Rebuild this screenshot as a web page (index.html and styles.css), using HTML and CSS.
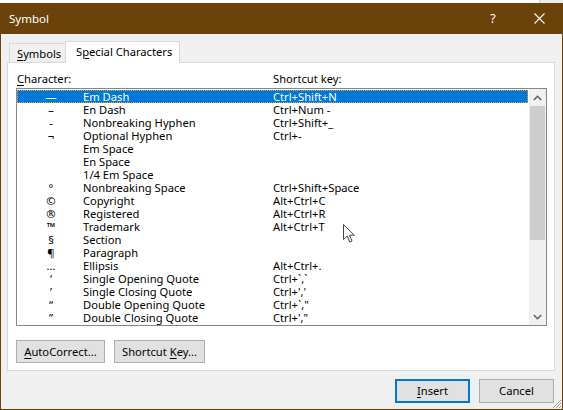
FILE: index.html
```html
<!DOCTYPE html>
<html>
<head>
<meta charset="utf-8">
<link rel="stylesheet" href="styles.css">
</head>
<body>
<div class="topstrip"><div class="other"></div></div>
<div class="window">
  <div class="titlebar">
    <span class="title">Symbol</span>
    <span class="help">?</span>
    <span class="close"><svg width="11" height="11" viewBox="0 0 11 11"><path d="M0.5 0.5L10.5 10.5M10.5 0.5L0.5 10.5" stroke="#fff" stroke-width="1.1" fill="none"/></svg></span>
  </div>
  <div class="content">
    <div class="tabs">
      <div class="tab"><span><u>S</u>ymbols</span></div>
      <div class="tab active"><span>S<u>p</u>ecial Characters</span></div>
    </div>
    <div class="panel">
      <div class="labels">
        <span class="lab-char"><u>C</u>haracter:</span>
        <span class="lab-key">Shortcut key:</span>
      </div>
      <div class="list">
        <div class="rows">
          <div class="row selected"><span class="sym">—</span><span class="name">Em Dash</span><span class="key">Ctrl+Shift+N</span></div>
          <div class="row"><span class="sym">–</span><span class="name">En Dash</span><span class="key">Ctrl+Num -</span></div>
          <div class="row"><span class="sym small">-</span><span class="name">Nonbreaking Hyphen</span><span class="key">Ctrl+Shift+_</span></div>
          <div class="row"><span class="sym">¬</span><span class="name">Optional Hyphen</span><span class="key">Ctrl+-</span></div>
          <div class="row"><span class="sym"></span><span class="name">Em Space</span><span class="key"></span></div>
          <div class="row"><span class="sym"></span><span class="name">En Space</span><span class="key"></span></div>
          <div class="row"><span class="sym"></span><span class="name">1/4 Em Space</span><span class="key"></span></div>
          <div class="row"><span class="sym">°</span><span class="name">Nonbreaking Space</span><span class="key">Ctrl+Shift+Space</span></div>
          <div class="row"><span class="sym">©</span><span class="name">Copyright</span><span class="key">Alt+Ctrl+C</span></div>
          <div class="row"><span class="sym">®</span><span class="name">Registered</span><span class="key">Alt+Ctrl+R</span></div>
          <div class="row"><span class="sym">™</span><span class="name">Trademark</span><span class="key">Alt+Ctrl+T</span></div>
          <div class="row"><span class="sym">§</span><span class="name">Section</span><span class="key"></span></div>
          <div class="row"><span class="sym">¶</span><span class="name">Paragraph</span><span class="key"></span></div>
          <div class="row"><span class="sym">…</span><span class="name">Ellipsis</span><span class="key">Alt+Ctrl+.</span></div>
          <div class="row"><span class="sym">‘</span><span class="name">Single Opening Quote</span><span class="key">Ctrl+`,`</span></div>
          <div class="row"><span class="sym">’</span><span class="name">Single Closing Quote</span><span class="key">Ctrl+','</span></div>
          <div class="row"><span class="sym">“</span><span class="name">Double Opening Quote</span><span class="key">Ctrl+`,"</span></div>
          <div class="row"><span class="sym">”</span><span class="name">Double Closing Quote</span><span class="key">Ctrl+',"</span></div>
        </div>
        <div class="scrollbar">
          <div class="arrow"><svg width="9" height="6" viewBox="0 0 9 6"><path d="M0.8 5L4.5 1.3L8.2 5" stroke="#606060" stroke-width="1.6" fill="none"/></svg></div>
          <div class="thumb"></div>
          <div class="track"></div>
          <div class="arrow"><svg width="9" height="6" viewBox="0 0 9 6"><path d="M0.8 1L4.5 4.7L8.2 1" stroke="#606060" stroke-width="1.6" fill="none"/></svg></div>
        </div>
      </div>
      <div class="panel-buttons">
        <div class="btn btn-auto"><span><u>A</u>utoCorrect...</span></div>
        <div class="btn btn-short"><span>Shortcut <u>K</u>ey...</span></div>
      </div>
    </div>
    <div class="dialog-buttons">
      <div class="btn btn-dlg btn-insert"><span><u>I</u>nsert</span></div>
      <div class="btn btn-dlg"><span>Cancel</span></div>
    </div>
  </div>
  <svg class="grip" width="10" height="10" viewBox="0 0 10 10"><path d="M9 1L1 9M9 4L4 9M9 7L7 9" stroke="#a0a0a0" stroke-width="1" fill="none"/></svg>
  <svg class="cursor" width="14" height="20" viewBox="0 0 14 20"><path d="M0.5 0.5L0.5 15.5L4.2 12L6.8 18L9 17L6.5 11.2L11.3 11.2Z" fill="#fff" stroke="#444" stroke-width="1" stroke-linejoin="round"/></svg>
</div>
</body>
</html>
```
FILE: styles.css
```css
html, body {
  margin: 0;
  padding: 0;
  background: #ffffff;
}
body {
  width: 563px;
  height: 410px;
  overflow: hidden;
  font-family: "Noto Sans", "Open Sans", sans-serif;
  font-size: 11.2px;
  color: #000;
}
u { text-decoration: underline; text-underline-offset: 2px; }
.topstrip {
  height: 3px;
  display: flex;
  justify-content: flex-end;
}
.topstrip .other {
  width: 23px;
  background: #ececec;
  border-left: 1px solid #cfcfcf;
}
.window {
  position: relative;
  width: 563px;
  height: 407px;
  box-sizing: border-box;
  border: 1px solid #6b430a;
  border-top: none;
  background: #f0f0f0;
  display: flex;
  flex-direction: column;
}
.titlebar {
  height: 31px;
  flex: none;
  background: #6b430a;
  color: #fff;
  display: flex;
  align-items: center;
  padding-left: 8px;
  box-sizing: border-box;
}
.title { flex: 1; font-size: 11.5px; }
.help {
  width: 12px;
  text-align: center;
  font-size: 12.5px;
  margin-right: 35px;
}
.close {
  width: 11px;
  height: 11px;
  display: flex;
  margin-right: 17px;
  margin-top: -1px;
}
.content {
  flex: 1;
  padding: 7px 7px 0 6px;
  display: flex;
  flex-direction: column;
}
.tabs {
  height: 21px;
  display: flex;
  align-items: flex-end;
  padding-left: 2px;
  position: relative;
  z-index: 1;
}
.tab {
  height: 19px;
  box-sizing: border-box;
  border: 1px solid #d9d9d9;
  border-bottom: none;
  background: #f0f0f0;
  width: 57px;
  padding-left: 7px;
  line-height: 19px;
  white-space: nowrap;
}
.tab.active {
  height: 22px;
  margin-bottom: -1px;
  margin-left: -1px;
  width: 115px;
  background: #fff;
  padding-left: 10px;
  line-height: 20px;
}
.panel {
  height: 309px;
  box-sizing: border-box;
  border: 1px solid #d9d9d9;
  background: #fff;
  display: flex;
  flex-direction: column;
  padding: 0 6px 0 8px;
}
.labels {
  height: 25px;
  box-sizing: border-box;
  padding-top: 8px;
  display: flex;
  line-height: 16px;
}
.lab-char { width: 256px; padding-left: 1px; }
.list {
  height: 238px;
  width: 531px;
  box-sizing: border-box;
  border: 1px solid #828790;
  display: flex;
}
.rows {
  flex: 1;
  padding-top: 1px;
}
.row {
  height: 13px;
  line-height: 13px;
  display: flex;
  box-sizing: border-box;
  width: 511px;
  white-space: nowrap;
}
.row.selected {
  background: #0078d7;
  color: #fff;
  outline: 1px dotted #f3a040;
  outline-offset: -1px;
}
.sym {
  width: 66px;
  padding-left: 2px;
  text-align: center;
  box-sizing: border-box;
}
.name { width: 190px; }
.key { flex: 1; }
.scrollbar {
  width: 17px;
  background: #f0f0f0;
  display: flex;
  flex-direction: column;
}
.arrow {
  height: 17px;
  display: flex;
  align-items: center;
  justify-content: center;
}
.thumb {
  height: 134px;
  margin: 0 1px;
  background: #cdcdcd;
}
.track { flex: 1; }
.panel-buttons {
  margin-top: 14px;
  display: flex;
  gap: 9px;
}
.btn {
  height: 23px;
  box-sizing: border-box;
  border: 1px solid #adadad;
  background: #e1e1e1;
  display: flex;
  align-items: center;
  justify-content: center;
  line-height: 14px;
  white-space: nowrap;
}
.btn-auto { width: 89px; }
.btn-short { width: 91px; }
.dialog-buttons {
  margin-top: 8px;
  display: flex;
  justify-content: flex-end;
  gap: 9px;
  padding-right: 1px;
}
.btn-dlg { width: 75px; height: 24px; }
.btn-insert { border: 2px solid #0078d7; }
.grip {
  position: absolute;
  right: 0;
  bottom: 0;
}
.cursor {
  position: absolute;
  left: 342px;
  top: 221px;
}
```
